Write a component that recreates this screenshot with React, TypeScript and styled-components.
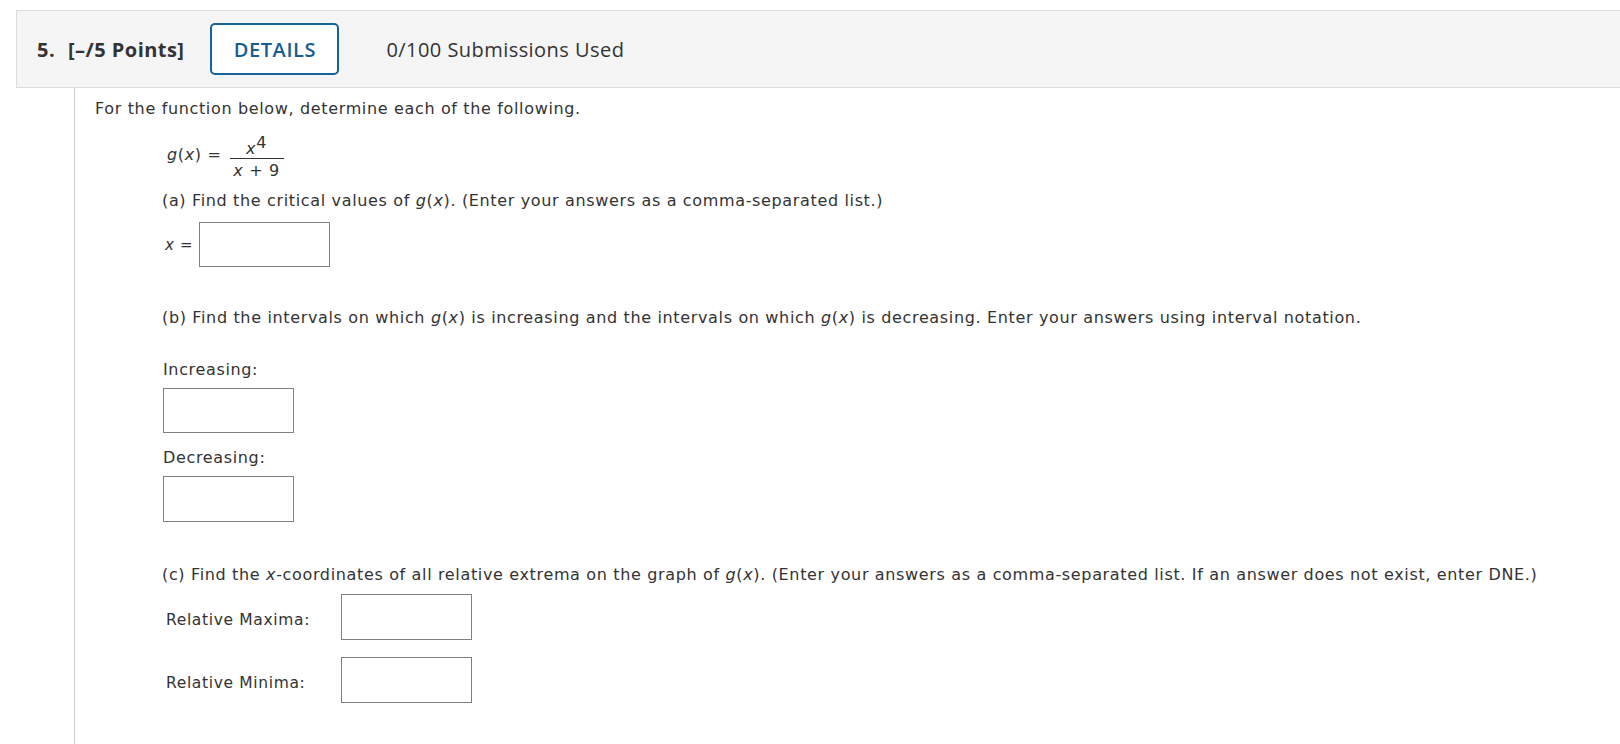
import React from "react";
import styled, { createGlobalStyle } from "styled-components";

const Global = createGlobalStyle`
  html, body { margin: 0; padding: 0; background: #ffffff; overflow: hidden; }
  body { font-family: "DejaVu Sans", Verdana, sans-serif; color: #333333; }
`;

const Page = styled.div`
  padding-top: 10px;
  width: 1620px;
  height: 744px;
  box-sizing: border-box;
`;

const Header = styled.div`
  margin-left: 16px;
  width: 1620px;
  height: 78px;
  box-sizing: border-box;
  background: #f5f5f5;
  border: 1px solid #dcdcdc;
  display: flex;
  align-items: center;
  padding-left: 20px;
  font-family: "Open Sans", sans-serif;
  font-size: 20px;
  letter-spacing: 0.45px;
  color: #333333;
`;

const QNum = styled.span`
  font-weight: 700;
  margin-right: 13px;
`;

const Points = styled.span`
  font-weight: 700;
  margin-right: 26px;
`;

const DetailsButton = styled.button`
  width: 129px;
  height: 52px;
  box-sizing: border-box;
  border: 2px solid #16629c;
  border-radius: 5px;
  background: #ffffff;
  color: #185d92;
  font-family: "Open Sans", sans-serif;
  font-size: 20px;
  font-weight: 600;
  letter-spacing: 0.6px;
  padding: 0;
  margin-right: 47px;
`;

const Submissions = styled.span`
  font-weight: 400;
`;

const Body = styled.div`
  margin-left: 74px;
  border-left: 1px solid #cccccc;
  height: 656px;
  box-sizing: border-box;
  padding: 11px 0 0 20px;
  font-size: 16px;
  line-height: 20px;
  letter-spacing: 0.65px;
`;

const Para = styled.div<{ $mt?: number; $indent?: number }>`
  margin-top: ${(p) => p.$mt ?? 0}px;
  padding-left: ${(p) => p.$indent ?? 0}px;
  white-space: nowrap;
`;

const Formula = styled.div`
  margin-top: 21px;
  padding-left: 72px;
  display: flex;
  align-items: flex-start;
`;

const Lhs = styled.span`
  margin-top: 5px;
  margin-right: 8px;
`;

const Fraction = styled.span`
  display: inline-flex;
  flex-direction: column;
  align-items: center;
  width: 54px;
`;

const Numerator = styled.span`
  line-height: 18px;
  height: 18px;
`;

const Bar = styled.span`
  width: 100%;
  height: 1px;
  background: #333333;
`;

const Denominator = styled.span`
  line-height: 18px;
  padding-top: 3px;
`;

const Sup = styled.sup`
  font-size: 16px;
  vertical-align: 6px;
  line-height: 0;
`;

const Var = styled.i`
  font-style: italic;
`;

const AnswerRow = styled.div<{ $mt: number; $indent: number }>`
  margin-top: ${(p) => p.$mt}px;
  padding-left: ${(p) => p.$indent}px;
  display: flex;
  align-items: center;
`;

const AnswerLabel = styled.span`
  margin-right: 6px;
  font-size: 15px;
`;

const Box = styled.div<{ $h?: number }>`
  width: 131px;
  height: ${(p) => p.$h ?? 45}px;
  box-sizing: border-box;
  border: 1px solid #808080;
  background: #ffffff;
`;

const ExtremaGrid = styled.div`
  margin-top: 9px;
  padding-left: 71px;
  display: grid;
  grid-template-columns: 175px 131px;
  row-gap: 17px;
  align-items: center;
`;

const ExtremaLabel = styled.span`
  padding-top: 6px;
  font-size: 15.5px;
`;

export default function App() {
  return (
    <>
      <Global />
      <Page>
        <Header>
          <QNum>5.</QNum>
          <Points>[–/5 Points]</Points>
          <DetailsButton>DETAILS</DetailsButton>
          <Submissions>0/100 Submissions Used</Submissions>
        </Header>
        <Body>
          <Para>For the function below, determine each of the following.</Para>
          <Formula>
            <Lhs>
              <Var>g</Var>(<Var>x</Var>) =
            </Lhs>
            <Fraction>
              <Numerator>
                <Var>x</Var>
                <Sup>4</Sup>
              </Numerator>
              <Bar />
              <Denominator>
                <Var>x</Var> + 9
              </Denominator>
            </Fraction>
          </Formula>
          <Para $mt={11} $indent={67}>
            (a) Find the critical values of <Var>g</Var>(<Var>x</Var>). (Enter your answers as a comma-separated list.)
          </Para>
          <AnswerRow $mt={11} $indent={70}>
            <AnswerLabel>
              <Var>x</Var> =
            </AnswerLabel>
            <Box />
          </AnswerRow>
          <Para $mt={41} $indent={67}>
            (b) Find the intervals on which <Var>g</Var>(<Var>x</Var>) is increasing and the intervals on which{" "}
            <Var>g</Var>(<Var>x</Var>) is decreasing. Enter your answers using interval notation.
          </Para>
          <Para $mt={32} $indent={68}>
            Increasing:
          </Para>
          <AnswerRow $mt={8} $indent={68}>
            <Box />
          </AnswerRow>
          <Para $mt={15} $indent={68}>
            Decreasing:
          </Para>
          <AnswerRow $mt={8} $indent={68}>
            <Box $h={46} />
          </AnswerRow>
          <Para $mt={43} $indent={67}>
            (c) Find the <Var>x</Var>-coordinates of all relative extrema on the graph of <Var>g</Var>(<Var>x</Var>).
            (Enter your answers as a comma-separated list. If an answer does not exist, enter DNE.)
          </Para>
          <ExtremaGrid>
            <ExtremaLabel>Relative Maxima:</ExtremaLabel>
            <Box $h={46} />
            <ExtremaLabel>Relative Minima:</ExtremaLabel>
            <Box $h={46} />
          </ExtremaGrid>
        </Body>
      </Page>
    </>
  );
}
